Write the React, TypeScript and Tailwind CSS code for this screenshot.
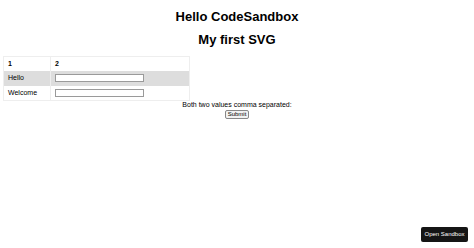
import React from 'react';

export default function App() {
  return (
    <div className="relative h-[248px] w-[474px] bg-white text-[#000000]" style={{ fontFamily: '"Liberation Sans", Arial, sans-serif' }}>
      <h1 className="pt-[8px] text-center text-[13px] font-bold leading-[17px]">Hello CodeSandbox</h1>
      <h2 className="mt-[6px] text-center text-[13px] font-bold leading-[17px]">My first SVG</h2>

      <table className="ml-[3px] mt-[8px] w-[187px] border-collapse border border-[#eeeeee] text-[7px]">
        <thead>
          <tr className="h-[14px]">
            <th className="w-[47px] border-r border-[#eeeeee] pl-[4px] text-left font-bold">1</th>
            <th className="pl-[4px] text-left font-bold">2</th>
          </tr>
        </thead>
        <tbody>
          <tr className="h-[15px] bg-[#dddddd]">
            <td className="border-r border-[#eeeeee] pl-[4px]">Hello</td>
            <td className="pl-[4px]">
              <input className="block h-[8px] w-[89px] border border-[#9a9a9a] bg-white" />
            </td>
          </tr>
          <tr className="h-[15px]">
            <td className="border-r border-[#eeeeee] pl-[4px]">Welcome</td>
            <td className="pl-[4px]">
              <input className="block h-[8px] w-[89px] border border-[#9a9a9a] bg-white" />
            </td>
          </tr>
        </tbody>
      </table>

      <div className="flex flex-col items-center text-[7px] leading-[8px]">
        <p>Both two values comma separated:</p>
        <button className="mt-[1px] rounded-[2px] border border-[#888888] bg-[#f2f2f2] px-[2px] text-[6px] leading-[7px]">Submit</button>
      </div>

      <button className="absolute bottom-[6px] right-[6px] h-[15px] w-[47px] rounded-[2px] bg-[#151515] text-[6px] text-white">Open Sandbox</button>
    </div>
  );
}
